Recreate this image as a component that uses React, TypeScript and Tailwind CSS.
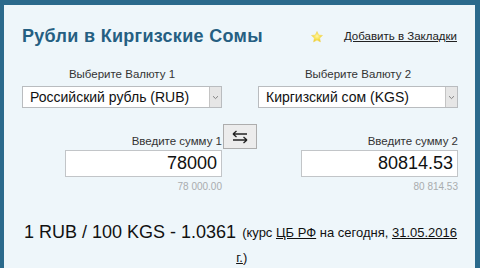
import React from "react";

const font = { fontFamily: '"Liberation Sans", Arial, sans-serif' };

function Star() {
  return (
    <svg width="14" height="14" viewBox="0 0 24 24">
      <defs>
        <radialGradient id="sg" cx="50%" cy="45%" r="60%">
          <stop offset="0%" stopColor="#fff6a8" />
          <stop offset="60%" stopColor="#f6dc3a" />
          <stop offset="100%" stopColor="#e9c21f" />
        </radialGradient>
      </defs>
      <path
        d="M12 2.5l2.9 6.1 6.6.8-4.9 4.5 1.3 6.6L12 17.2l-5.9 3.3 1.3-6.6-4.9-4.5 6.6-.8z"
        fill="url(#sg)"
        stroke="#f0d86a"
        strokeWidth="1"
        strokeLinejoin="round"
      />
    </svg>
  );
}

function Select({ value }: { value: string }) {
  return (
    <div className="flex h-[22px] w-[200px] items-stretch border border-[#b9bcbf] bg-white">
      <span className="flex-1 truncate pl-[7px] text-[14px] leading-[20px] text-[#111]">{value}</span>
      <span className="flex w-[12px] items-center justify-center border-l border-[#c4c4c4] bg-[#e6e6e6]">
        <svg width="7" height="5" viewBox="0 0 7 5">
          <path d="M1 1.2l2.5 2.4L6 1.2" fill="none" stroke="#777" strokeWidth="0.9" />
        </svg>
      </span>
    </div>
  );
}

function SwapIcon() {
  return (
    <svg width="18" height="14" viewBox="0 0 18 14">
      <path d="M2 4h14M2 4l3.5-3M2 4l3.5 3" fill="none" stroke="#222" strokeWidth="1.3" />
      <path d="M16 10H2M16 10l-3.5-3M16 10l-3.5 3" fill="none" stroke="#222" strokeWidth="1.3" />
    </svg>
  );
}

function Amount({ value, hint }: { value: string; hint: string }) {
  return (
    <div className="flex flex-col items-end">
      <div className="flex h-[27px] w-[157px] items-center justify-end border border-[#c2c5c8] bg-white pr-[4px] text-[18px] text-[#111]">
        {value}
      </div>
      <span className="mt-[4px] text-[10px] leading-[12px] text-[#a9acae]">{hint}</span>
    </div>
  );
}

export default function App() {
  return (
    <div
      className="h-[268px] w-[480px] overflow-hidden border-x-[4px] border-t-[5px] border-[#2b6a8c] border-r-[5px] bg-[#eef6fa]"
      style={font}
    >
      <div className="px-[18px]">
        <div className="flex h-[62px] items-center pt-[1px]">
          <h1 className="text-[18px] font-bold tracking-[0.3px] text-[#255f82]">Рубли в Киргизские Сомы</h1>
          <div className="ml-auto flex items-center">
            <Star />
            <a href="#" className="ml-[20px] text-[11.5px] text-[#222] underline">
              Добавить в Закладки
            </a>
          </div>
        </div>

        <div className="grid grid-cols-[200px_36px_200px]">
          <div className="flex flex-col items-center">
            <span className="text-[11.5px] leading-[14px] text-[#333]">Выберите Валюту 1</span>
            <div className="mt-[5px]">
              <Select value="Российский рубль (RUB)" />
            </div>
          </div>
          <div />
          <div className="flex flex-col items-center">
            <span className="text-[11.5px] leading-[14px] text-[#333]">Выберите Валюту 2</span>
            <div className="mt-[5px]">
              <Select value="Киргизский сом (KGS)" />
            </div>
          </div>

          <div className="mt-[15px] flex flex-col items-end">
            <span className="mt-[11px] text-[11.5px] leading-[14px] text-[#333]">Введите сумму 1</span>
            <div className="mt-[2px]">
              <Amount value="78000" hint="78 000.00" />
            </div>
          </div>
          <div className="mt-[16px] flex justify-center">
            <button className="flex h-[25px] w-[34px] items-center justify-center border border-[#adadad] bg-[#ececec]">
              <SwapIcon />
            </button>
          </div>
          <div className="mt-[15px] flex flex-col items-end">
            <span className="mt-[11px] text-[11.5px] leading-[14px] text-[#333]">Введите сумму 2</span>
            <div className="mt-[2px]">
              <Amount value="80814.53" hint="80 814.53" />
            </div>
          </div>
        </div>

        <div className="mt-[27px] flex items-start pl-[2px] text-[#111]">
          <span className="shrink-0 whitespace-nowrap text-[18px] leading-[25px]">1 RUB / 100 KGS - 1.0361</span>
          <p className="w-[224px] shrink-0 indent-[6px] text-[13px] leading-[25px]">
            (курс <a href="#" className="underline">ЦБ РФ</a> на сегодня,{" "}
            <a href="#" className="underline">31.05.2016 г.</a>)
          </p>
        </div>
      </div>
    </div>
  );
}
